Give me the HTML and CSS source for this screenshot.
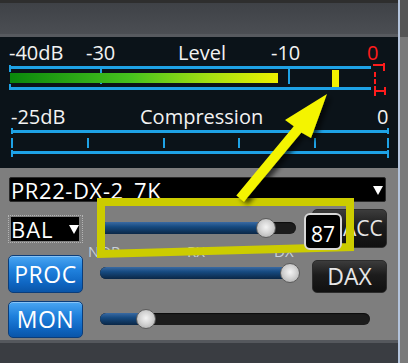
FILE: index.html
```html
<!DOCTYPE html>
<html>
<head>
<meta charset="utf-8">
<link rel="stylesheet" href="styles.css">
</head>
<body>
<div class="app">
  <div class="main">
    <div class="header"></div>
    <div class="meters">
      <div class="labels lvl-labels">
        <span>-40dB</span><span>-30</span><span>Level</span><span>-10</span><span class="red">0</span>
      </div>
      <svg class="scale" width="398" height="40" viewBox="0 63 398 40">
        <defs>
          <linearGradient id="lvlg" x1="0" x2="1" y1="0" y2="0">
            <stop offset="0" stop-color="#0a870c"/>
            <stop offset="0.45" stop-color="#46c21e"/>
            <stop offset="0.75" stop-color="#a6e012"/>
            <stop offset="1" stop-color="#ecf000"/>
          </linearGradient>
        </defs>
        <g fill="#1ea2e6">
          <rect x="9" y="66" width="362" height="3"/>
          <rect x="9" y="65" width="2" height="7"/>
          <rect x="100" y="69" width="2" height="15"/>
          <rect x="288" y="69" width="2" height="15"/>
          <rect x="9" y="87" width="362" height="3"/>
          <rect x="9" y="84" width="2" height="6"/>
        </g>
        <rect x="10" y="73" width="268" height="10" fill="url(#lvlg)"/>
        <rect x="332" y="70" width="7" height="17" fill="#f2f200"/>
        <g stroke="#ff1c1c" stroke-width="2" fill="none">
          <path d="M373 65 H384 M384 61 V71"/>
          <path d="M375 72 V77 M375 79 V84"/>
          <path d="M375 86 V96 M375 91 H385 M385 87 V95"/>
        </g>
      </svg>
      <div class="labels cmp-labels">
        <span>-25dB</span><span>Compression</span><span>0</span>
      </div>
      <svg class="scale" width="398" height="41" viewBox="0 127 398 41">
        <g fill="#1ea2e6">
          <rect x="11" y="130" width="378" height="3"/>
          <rect x="11" y="128" width="2" height="6"/>
          <rect x="387" y="128" width="2" height="6"/>
          <rect x="11" y="138" width="2" height="10"/>
          <rect x="87" y="138" width="2" height="10"/>
          <rect x="163" y="138" width="2" height="10"/>
          <rect x="238" y="138" width="2" height="10"/>
          <rect x="314" y="138" width="2" height="10"/>
          <rect x="387" y="138" width="2" height="10"/>
          <rect x="11" y="151" width="378" height="3"/>
          <rect x="11" y="150" width="2" height="7"/>
          <rect x="387" y="150" width="2" height="8"/>
        </g>
      </svg>
    </div>
    <div class="controls">
      <div class="preset">
        <span>PR22-DX-2_7K</span>
        <svg class="caret" width="10" height="10" viewBox="0 0 10 10"><polygon points="0,1 10,1 5,10" fill="#fff"/></svg>
      </div>
      <div class="grid">
        <div class="bal">
          <span>BAL</span>
          <svg class="caret" width="10" height="10" viewBox="0 0 10 10"><polygon points="0,1 10,1 5,10" fill="#fff"/></svg>
        </div>
        <div class="slider-cell s1">
          <div class="slider">
            <div class="track"><div class="fill" style="width:166px"></div></div>
            <div class="knob" style="left:156px"></div>
          </div>
          <div class="marks"><span>NOR</span><span>RX</span><span>DX</span></div>
        </div>
        <div class="btn dark acc">ACC</div>

        <div class="btn blue">PROC</div>
        <div class="slider-cell s2">
          <div class="slider">
            <div class="track"><div class="fill" style="width:190px"></div></div>
            <div class="knob" style="left:180px"></div>
          </div>
        </div>
        <div class="btn dark dax">DAX</div>

        <div class="btn blue mon">MON</div>
        <div class="slider-cell s3">
          <div class="slider">
            <div class="track"><div class="fill" style="width:46px"></div></div>
            <div class="knob" style="left:36px"></div>
          </div>
        </div>
      </div>
    </div>
    <div class="footer"></div>
  </div>
  <div class="edge"></div>
</div>

<svg class="annot" width="408" height="363" viewBox="0 0 408 363">
  <defs>
    <filter id="sh" x="-30%" y="-30%" width="160%" height="160%">
      <feDropShadow dx="4" dy="3" stdDeviation="2.5" flood-color="#000" flood-opacity="0.65"/>
    </filter>
  </defs>
  <path d="M101 202 H350 V247 L101 254 Z" fill="none" stroke="#cccc00" stroke-width="8" stroke-linejoin="miter"/>
  <polygon filter="url(#sh)" fill="#f4f400" points="327,94 311,138 301.4,132.6 243.9,201.8 236.3,195.4 293.8,126.2 285,120"/>
</svg>
<div class="value-pop">87</div>
</body>
</html>
```

FILE: styles.css
```css
* {
  box-sizing: border-box;
  margin: 0;
  padding: 0;
}

html,
body {
  width: 408px;
  height: 363px;
  overflow: hidden;
}

body {
  position: relative;
  background: #7e7e7e;
  font-family: "Open Sans", "Noto Sans", sans-serif;
  color: #fff;
}

.app {
  display: flex;
  height: 363px;
}

.main {
  width: 398px;
  display: flex;
  flex-direction: column;
}

.edge {
  width: 10px;
  background: linear-gradient(#555 0, #555 37px, #7a7a7a 37px);
  border-left: 2px solid #b4c4dc;
}

.header {
  height: 37px;
  border-top: 3px solid #2e2e2e;
  border-bottom: 3px solid #575a5f;
  background: linear-gradient(#3f4247, #4b4e53);
}

.meters {
  height: 131px;
  background: #0b1319;
  display: flex;
  flex-direction: column;
}

.labels {
  display: grid;
  font-size: 20px;
  line-height: 20px;
  color: #f2f2f2;
  white-space: nowrap;
}

.lvl-labels {
  height: 26px;
  padding: 6px 0 0 9px;
  grid-template-columns: 77px 92px 93px 96px auto;
}

.cmp-labels {
  height: 24px;
  padding: 4px 0 0 11px;
  grid-template-columns: 129px 237px auto;
}

.red {
  color: #ff1c1c;
}

.scale {
  display: block;
}

.controls {
  height: 172px;
  padding: 9px 11px 0 8px;
  display: flex;
  flex-direction: column;
}

.preset {
  margin-left: 1px;
  width: 377px;
  height: 25px;
  background: #000;
  border: 1px solid #2a2a2a;
  border-radius: 2px;
  display: flex;
  align-items: center;
  justify-content: space-between;
  padding: 0 2px 0 1px;
  font-size: 22px;
  line-height: 22px;
  letter-spacing: 0.6px;
}

.caret {
  display: block;
  flex: none;
}

.grid {
  margin-top: 7px;
  display: grid;
  grid-template-columns: 76px 196px 75px;
  grid-template-rows: 46px 46px 37px;
  column-gap: 16px;
  align-items: start;
}

.bal {
  margin-top: 6px;
  width: 75px;
  height: 28px;
  border: 1px dotted #b4b4b4;
  padding: 1px 3px 1px 2px;
  background: #000;
  background-clip: content-box;
  display: flex;
  align-items: center;
  justify-content: space-between;
  font-size: 22px;
  line-height: 22px;
  letter-spacing: 1px;
}

.slider-cell {
  position: relative;
}

.s1 {
  margin-top: 9px;
}

.s2 {
  margin-top: 8px;
}

.s3 {
  margin-top: 8px;
  grid-column: 2 / 4;
  width: 270px;
}

.slider {
  position: relative;
  height: 20px;
  display: flex;
  align-items: center;
}

.track {
  flex: 1;
  height: 12px;
  border-radius: 6px;
  background: #1c1c1c;
  overflow: hidden;
  box-shadow: inset 0 1px 1px rgba(0, 0, 0, 0.6);
}

.fill {
  height: 100%;
  background: linear-gradient(#3a6aa2, #164a80 40%, #0b2746);
}

.knob {
  position: absolute;
  top: 0;
  width: 20px;
  height: 20px;
  border-radius: 50%;
  border: 1px solid #5c5c5c;
  background: radial-gradient(circle at 50% 45%, #f4f4f4 0%, #d4d4d4 45%, #a4a4a4 100%);
}

.marks {
  margin-left: -12px;
  margin-top: 6px;
  display: grid;
  grid-template-columns: 99px 87px auto;
  font-size: 15px;
  line-height: 15px;
  color: #c8d0da;
}

.btn {
  display: flex;
  align-items: center;
  justify-content: center;
  border-radius: 5px;
  font-size: 23px;
  line-height: 23px;
}

.blue {
  width: 75px;
  height: 38px;
  color: #fff;
  letter-spacing: 0.5px;
  border: 1px solid #0b3d7a;
  background: linear-gradient(#4aa6f2 0%, #1f80dc 40%, #0f66c2 75%, #0a55a8 100%);
  box-shadow: inset 0 1px 0 rgba(255, 255, 255, 0.35);
}

.mon {
  height: 37px;
}

.dark {
  width: 75px;
  color: #e6e6e6;
  border: 1px solid #2c2c2c;
  background: linear-gradient(#3c3c3c 0%, #1c1c1c 45%, #101010 100%);
}

.acc {
  height: 39px;
  justify-content: flex-start;
  padding-left: 30px;
  font-size: 21px;
}

.dax {
  margin-top: 5px;
  height: 33px;
}

.footer {
  height: 23px;
  border-top: 3px solid #55585d;
  background: #3a3d42;
}

.annot {
  position: absolute;
  left: 0;
  top: 0;
  pointer-events: none;
}

.value-pop {
  position: absolute;
  left: 304px;
  top: 213px;
  width: 38px;
  height: 37px;
  border: 2px solid #d8d8d8;
  border-radius: 6px;
  background: #000;
  color: #fff;
  font-size: 21px;
  line-height: 21px;
  display: flex;
  align-items: center;
  justify-content: center;
  padding-top: 5px;
}
```
